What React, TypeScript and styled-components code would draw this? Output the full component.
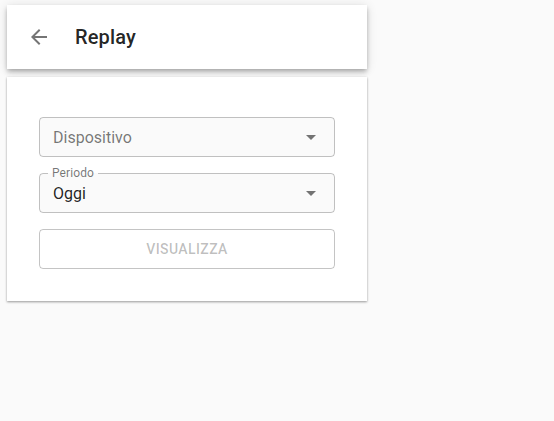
import React from 'react';
import styled, { createGlobalStyle } from 'styled-components';

const GlobalStyle = createGlobalStyle`
  html, body {
    margin: 0;
    padding: 0;
    background: #fafafa;
    font-family: Roboto, "Liberation Sans", sans-serif;
  }
`;

const Page = styled.div`
  width: 360px;
  padding: 5px 0 40px 7px;
  display: flex;
  flex-direction: column;
  gap: 8px;
`;

const Toolbar = styled.header`
  height: 64px;
  background: #fff;
  display: flex;
  align-items: center;
  padding-left: 20px;
  box-sizing: border-box;
  box-shadow: 0 2px 4px -1px rgba(0, 0, 0, 0.2), 0 4px 5px 0 rgba(0, 0, 0, 0.14),
    0 1px 10px 0 rgba(0, 0, 0, 0.12);
`;

const BackIcon = styled.svg`
  width: 24px;
  height: 24px;
  fill: #757575;
  margin-right: 24px;
`;

const Title = styled.h1`
  margin: 0;
  font-size: 20px;
  font-weight: 500;
  color: rgba(0, 0, 0, 0.87);
  letter-spacing: 0.15px;
`;

const Card = styled.section`
  background: #fff;
  padding: 40px 32px 32px;
  display: flex;
  flex-direction: column;
  gap: 16px;
  box-shadow: 0 1px 2px 0 rgba(0, 0, 0, 0.3), 0 1px 3px 0 rgba(0, 0, 0, 0.12);
`;

const Field = styled.div`
  position: relative;
  height: 40px;
  box-sizing: border-box;
  display: flex;
  align-items: center;
  padding: 0 14px;
  background: #fafafa;
  border-radius: 4px;
`;

const Outline = styled.fieldset<{ $notched?: boolean }>`
  position: absolute;
  inset: ${(p) => (p.$notched ? '-5px' : '0')} 0 0 0;
  margin: 0;
  padding: 0 8px;
  border: 1px solid rgba(0, 0, 0, 0.23);
  border-radius: 4px;
  pointer-events: none;
`;

const Legend = styled.legend`
  padding: 0 4px;
  font-size: 12px;
  line-height: 11px;
  color: rgba(0, 0, 0, 0.54);
  letter-spacing: 0.1px;
`;

const Value = styled.span<{ $placeholder?: boolean }>`
  flex: 1;
  font-size: 16px;
  color: ${(p) => (p.$placeholder ? 'rgba(0, 0, 0, 0.54)' : 'rgba(0, 0, 0, 0.87)')};
`;

const Caret = styled.svg`
  width: 24px;
  height: 24px;
  fill: rgba(0, 0, 0, 0.54);
  margin-right: -2px;
`;

const OutlinedButton = styled.button`
  height: 40px;
  background: transparent;
  border: 1px solid rgba(0, 0, 0, 0.23);
  border-radius: 4px;
  font-family: inherit;
  font-size: 14px;
  font-weight: 500;
  letter-spacing: 0.4px;
  color: rgba(0, 0, 0, 0.26);
  text-transform: uppercase;
`;

const SelectField = ({ label, value }: { label?: string; value?: string }) => (
  <Field>
    <Outline $notched={!!label}>{label && <Legend>{label}</Legend>}</Outline>
    <Value $placeholder={!value}>{value ?? 'Dispositivo'}</Value>
    <Caret viewBox="0 0 24 24">
      <path d="M7 10l5 5 5-5z" />
    </Caret>
  </Field>
);

const App = () => (
  <>
    <GlobalStyle />
    <Page>
      <Toolbar>
        <BackIcon viewBox="0 0 24 24">
          <path d="M20 11H7.83l5.59-5.59L12 4l-8 8 8 8 1.41-1.41L7.83 13H20v-2z" />
        </BackIcon>
        <Title>Replay</Title>
      </Toolbar>
      <Card>
        <SelectField />
        <SelectField label="Periodo" value="Oggi" />
        <OutlinedButton disabled>Visualizza</OutlinedButton>
      </Card>
    </Page>
  </>
);

export default App;
